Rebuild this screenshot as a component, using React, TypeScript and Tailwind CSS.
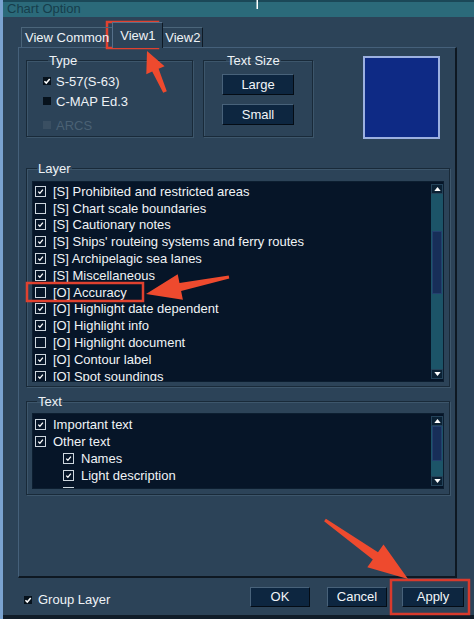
import React from 'react'

type Row = { label: string; checked: boolean; indent?: boolean }

const layerRows: Row[] = [
  { label: '[S] Prohibited and restricted areas', checked: true },
  { label: '[S] Chart scale boundaries', checked: false },
  { label: '[S] Cautionary notes', checked: true },
  { label: "[S] Ships' routeing systems and ferry routes", checked: true },
  { label: '[S] Archipelagic sea lanes', checked: true },
  { label: '[S] Miscellaneous', checked: true },
  { label: '[O] Accuracy', checked: false },
  { label: '[O] Highlight date dependent', checked: true },
  { label: '[O] Highlight info', checked: true },
  { label: '[O] Highlight document', checked: false },
  { label: '[O] Contour label', checked: true },
  { label: '[O] Spot soundings', checked: true },
]

const textRows: Row[] = [
  { label: 'Important text', checked: true },
  { label: 'Other text', checked: true },
  { label: 'Names', checked: true, indent: true },
  { label: 'Light description', checked: true, indent: true },
  { label: 'All other', checked: true, indent: true },
]

function Tick() {
  return (
    <svg viewBox="0 0 10 10" className="w-full h-full">
      <path d="M1.8 5.2 L4.1 7.6 L8.4 2.4" stroke="#ffffff" strokeWidth="1.9" fill="none" />
    </svg>
  )
}

function ListBox({ checked }: { checked: boolean }) {
  return (
    <span className="w-[11px] h-[11px] border border-[#cdd6de] flex items-center justify-center shrink-0 p-[1px]">
      {checked && <Tick />}
    </span>
  )
}

function SmallBox({ checked, disabled }: { checked: boolean; disabled?: boolean }) {
  return (
    <span
      className={
        disabled
          ? 'w-[8px] h-[8px] bg-[#3a4f62] shrink-0'
          : 'w-[8px] h-[8px] bg-[#07121c] shrink-0 flex items-center justify-center'
      }
    >
      {checked && <Tick />}
    </span>
  )
}

function Arrow({ up }: { up: boolean }) {
  return (
    <div className="h-[10px] bg-[#0b2134] border border-[#24435a] flex items-center justify-center shrink-0">
      <svg viewBox="0 0 8 5" className="w-[7px] h-[4px]">
        <polygon points={up ? '4,0 8,5 0,5' : '0,0 8,0 4,5'} fill="#ffffff" />
      </svg>
    </div>
  )
}

function ScrollBar({ thumbTop, thumbHeight }: { thumbTop: number; thumbHeight: number }) {
  return (
    <div className="w-[12px] flex flex-col py-[2px] shrink-0">
      <Arrow up />
      <div className="flex-1 bg-[#1c5468] relative">
        <div
          className="absolute left-[1px] right-[1px] bg-[#172e58] border border-[#23406e]"
          style={{ top: thumbTop, height: thumbHeight }}
        />
      </div>
      <Arrow up={false} />
    </div>
  )
}

function Btn({ label, className }: { label: string; className: string }) {
  return (
    <div
      className={`${className} bg-[#0d2640] border border-t-[#48627a] border-l-[#48627a] border-r-[#040c15] border-b-[#040c15] flex items-center justify-center text-[#f2f5f8]`}
    >
      {label}
    </div>
  )
}

function arrowPoints(tx: number, ty: number, px: number, py: number, L: number, W: number, w1: number, w0: number) {
  const dx = px - tx
  const dy = py - ty
  const len = Math.hypot(dx, dy)
  const ux = dx / len
  const uy = dy / len
  const nx = -uy
  const ny = ux
  const bx = px - ux * L
  const by = py - uy * L
  const pts = [
    [tx + (nx * w0) / 2, ty + (ny * w0) / 2],
    [bx + (nx * w1) / 2, by + (ny * w1) / 2],
    [bx + nx * W, by + ny * W],
    [px, py],
    [bx - nx * W, by - ny * W],
    [bx - (nx * w1) / 2, by - (ny * w1) / 2],
    [tx - (nx * w0) / 2, ty - (ny * w0) / 2],
  ]
  return pts.map(p => p.map(v => v.toFixed(1)).join(',')).join(' ')
}

export default function App() {
  return (
    <div className="relative w-[474px] h-[619px] overflow-hidden font-['Liberation_Sans',Arial,sans-serif] text-[13px] leading-[15px]">
      <div className="w-full h-full flex flex-col bg-[#2c4358] border-l-[3px] border-[#7aa3d0]">
        {/* Title bar */}
        <div className="h-[17px] shrink-0 bg-[#2b6a7a] border-t-[2px] border-[#1b4858] pl-[4px] text-[#163d4b] leading-[14px]">
          Chart Option
        </div>

        {/* Tabs + panel */}
        <div className="pt-[5px] pl-[15px] pr-[17px] flex flex-col">
          <div className="h-[25px] flex items-end pl-[3px] relative z-10">
            <div className="h-[20px] px-[3px] flex items-center border-t border-l border-[#4b657a] text-[#eef2f6]">
              View Common
            </div>
            <div className="h-[26px] -mb-px w-[51px] flex items-center justify-center bg-[#2c4358] border-t border-l border-r border-t-[#56708a] border-l-[#56708a] border-r-[#0f1a25] text-[#eef2f6]">
              View1
            </div>
            <div className="h-[20px] w-[40px] pl-[2px] flex items-center border-t border-r border-t-[#4b657a] border-r-[#0f1a25] text-[#eef2f6]">
              View2
            </div>
          </div>

          <div className="h-[531px] border-t border-l border-t-[#45607a] border-l-[#45607a] border-r-2 border-b-2 border-r-[#0e1822] border-b-[#0e1822] pl-[7px] pr-[5px] flex flex-col text-[#eef2f6]">
            {/* Top row */}
            <div className="flex items-start mt-[5px]">
              <fieldset className="w-[167px] h-[84px] border border-[#192a39] shadow-[inset_1px_1px_0_#3d566b,1px_1px_0_#3d566b] pl-[16px] m-0">
                <legend className="ml-[5px] px-[1px] leading-[15px]">Type</legend>
                <div className="flex items-center gap-[5px] h-[16px] mt-[5px]">
                  <SmallBox checked />
                  <span>S-57(S-63)</span>
                </div>
                <div className="flex items-center gap-[5px] h-[16px] mt-[4px]">
                  <SmallBox checked={false} />
                  <span>C-MAP Ed.3</span>
                </div>
                <div className="flex items-center gap-[5px] h-[16px] mt-[8px] text-[#4a6174]">
                  <SmallBox checked={false} disabled />
                  <span>ARCS</span>
                </div>
              </fieldset>

              <fieldset className="ml-[10px] w-[110px] h-[84px] border border-[#192a39] shadow-[inset_1px_1px_0_#3d566b,1px_1px_0_#3d566b] pl-[18px] m-0">
                <legend className="ml-[4px] px-[1px] leading-[15px]">Text Size</legend>
                <Btn label="Large" className="w-[72px] h-[21px] mt-[6px]" />
                <Btn label="Small" className="w-[72px] h-[21px] mt-[9px]" />
              </fieldset>

              <div className="ml-[50px] mt-[3px] w-[77px] h-[83px] bg-[#0e2a85] border-2 border-[#9cb0e0]" />
            </div>

            {/* Layer */}
            <fieldset className="mt-[22px] w-[424px] h-[226px] border border-[#192a39] shadow-[inset_1px_1px_0_#3d566b,1px_1px_0_#3d566b] px-[5px] pt-[5px] pb-[4px] flex flex-col m-0">
              <legend className="ml-[5px] px-[1px] leading-[15px]">Layer</legend>
              <div className="h-[201px] bg-[#061528] border border-[#0c1e30] flex overflow-hidden">
                <div className="flex-1 pt-[1px] pl-[2px] overflow-hidden">
                  {layerRows.map(r => (
                    <div key={r.label} className="h-[16.8px] flex items-center gap-[7px] text-[#f0f3f6] whitespace-nowrap">
                      <ListBox checked={r.checked} />
                      <span>{r.label}</span>
                    </div>
                  ))}
                </div>
                <ScrollBar thumbTop={37} thumbHeight={63} />
              </div>
            </fieldset>

            {/* Text */}
            <fieldset className="mt-[7px] w-[424px] h-[101px] border border-[#192a39] shadow-[inset_1px_1px_0_#3d566b,1px_1px_0_#3d566b] px-[5px] pt-[4px] pb-[5px] flex flex-col m-0">
              <legend className="ml-[5px] px-[1px] leading-[15px]">Text</legend>
              <div className="h-[76px] bg-[#061528] border border-[#0c1e30] flex overflow-hidden">
                <div className="flex-1 pt-[2px] pl-[2px] overflow-hidden">
                  {textRows.map(r => (
                    <div
                      key={r.label}
                      className={`h-[17px] flex items-center gap-[7px] text-[#f0f3f6] whitespace-nowrap ${r.indent ? 'pl-[28px]' : ''}`}
                    >
                      <ListBox checked={r.checked} />
                      <span>{r.label}</span>
                    </div>
                  ))}
                </div>
                <ScrollBar thumbTop={0} thumbHeight={35} />
              </div>
            </fieldset>
          </div>
        </div>

        {/* Bottom bar */}
        <div className="h-[37px] shrink-0 flex items-center pl-[21px] pr-[10px] text-[#eef2f6]">
          <div className="flex items-center gap-[6px] mt-[6px]">
            <SmallBox checked />
            <span>Group Layer</span>
          </div>
          <div className="ml-auto flex items-center">
            <Btn label="OK" className="w-[60px] h-[20px]" />
            <Btn label="Cancel" className="w-[60px] h-[20px] ml-[17px]" />
            <Btn label="Apply" className="w-[62px] h-[20px] ml-[15px]" />
          </div>
        </div>
        <div className="h-[4px] shrink-0 bg-[#101c28]" />
      </div>

      {/* Annotations */}
      <svg className="absolute top-0 left-0 pointer-events-none" width="474" height="619" viewBox="0 0 474 619">
        <rect x="256.5" y="0" width="1.5" height="9" fill="#ffffff" />
        <rect x="107" y="22" width="51" height="26" fill="none" stroke="#e0412f" strokeWidth="2.5" />
        <rect x="27" y="283" width="116" height="18" fill="none" stroke="#e0412f" strokeWidth="2.5" />
        <rect x="391" y="580" width="78" height="34" fill="none" stroke="#d83a2c" strokeWidth="2.5" />
        <polygon points={arrowPoints(165, 92, 147, 51, 21, 10, 7, 4)} fill="#ee4a2e" />
        <polygon points={arrowPoints(229, 277, 146, 294, 35, 13, 8, 3)} fill="#ee4a2e" />
        <polygon points={arrowPoints(325, 520, 408, 579, 40, 14, 9, 3)} fill="#ee4a2e" />
      </svg>
    </div>
  )
}
